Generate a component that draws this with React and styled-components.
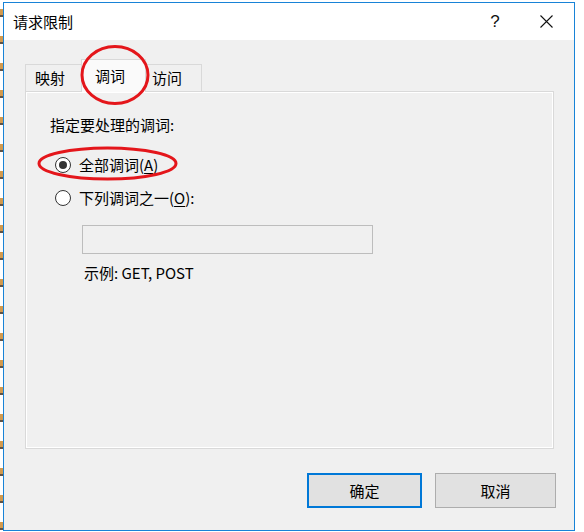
import React from 'react';
import styled, { createGlobalStyle } from 'styled-components';

const GlobalStyle = createGlobalStyle`
  html, body {
    margin: 0;
    padding: 0;
    background: #ffffff;
  }
  body {
    font-family: "Noto Sans CJK SC", "Liberation Sans", sans-serif;
    font-size: 15px;
    color: #000;
  }
`;

const Desktop = styled.div`
  position: relative;
  width: 584px;
  height: 532px;
  box-sizing: border-box;
  padding: 2px 0 0 3px;
  overflow: hidden;
  background:
    repeating-linear-gradient(
      to bottom,
      transparent 0 9px,
      #d39a4e 9px 15px,
      #5e5246 15px 17px,
      transparent 17px 27px
    ) 0 0 / 3px 100% no-repeat,
    #ffffff;
`;

const Window = styled.div`
  width: 572px;
  height: 529px;
  box-sizing: border-box;
  border: 1px solid #1883d7;
  background: #f0f0f0;
  display: flex;
  flex-direction: column;
`;

const TitleBar = styled.div`
  height: 37px;
  background: #ffffff;
  display: flex;
  align-items: center;
  padding-left: 9px;
  flex-shrink: 0;
`;

const Title = styled.div`
  flex: 1;
  font-size: 15px;
  line-height: 20px;
`;

const TitleButton = styled.div`
  width: ${p => p.$w}px;
  height: 37px;
  display: flex;
  align-items: center;
  justify-content: center;
  font-family: "Liberation Sans", sans-serif;
  font-size: 17px;
  color: #111;
`;

const Content = styled.div`
  flex: 1;
  display: flex;
  flex-direction: column;
  padding: 19px 18px 0 21px;
`;

const TabStrip = styled.div`
  display: flex;
  align-items: flex-end;
  height: 33px;
  margin-bottom: -1px;
  position: relative;
  z-index: 1;
`;

const Tab = styled.div`
  box-sizing: border-box;
  width: ${p => p.$w}px;
  height: ${p => (p.$active ? 33 : 28)}px;
  padding-left: ${p => p.$pl}px;
  margin-left: ${p => p.$ml}px;
  margin-right: ${p => (p.$active ? -2 : 0)}px;
  border: 1px solid #d9d9d9;
  border-bottom: ${p => (p.$active ? 'none' : '1px solid #d9d9d9')};
  background: ${p => (p.$active ? '#fafafa' : '#f0f0f0')};
  position: relative;
  z-index: ${p => (p.$active ? 2 : 1)};
  display: flex;
  align-items: ${p => (p.$active ? 'flex-start' : 'center')};
  padding-top: ${p => (p.$active ? 6 : 0)}px;
  line-height: 20px;
`;

const Panel = styled.div`
  box-sizing: border-box;
  width: 529px;
  height: 358px;
  border: 1px solid #d9d9d9;
  box-shadow: inset 1px 1px 0 #ffffff, inset -1px -1px 0 #ffffff;
  padding: 23px 0 0 24px;
  display: flex;
  flex-direction: column;
`;

const Label = styled.div`
  line-height: 20px;
`;

const RadioRow = styled.label`
  display: flex;
  align-items: center;
  gap: 8px;
  height: 20px;
  margin-top: ${p => p.$mt}px;
  margin-left: 5px;
  line-height: 20px;
`;

const RadioCircle = styled.span`
  box-sizing: border-box;
  width: 16px;
  height: 16px;
  border-radius: 50%;
  border: 1px solid #333333;
  background: #ffffff;
  display: flex;
  align-items: center;
  justify-content: center;
  &::after {
    content: '';
    width: 8px;
    height: 8px;
    border-radius: 50%;
    background: ${p => (p.$checked ? '#333333' : 'transparent')};
  }
`;

const Key = styled.span`
  text-decoration: underline;
  text-underline-offset: 2px;
`;

const TextBox = styled.div`
  box-sizing: border-box;
  width: 291px;
  height: 29px;
  margin: 17px 0 0 32px;
  border: 1px solid #bdbdbd;
  background: #f0f0f0;
`;

const Hint = styled.div`
  margin: 9px 0 0 34px;
  line-height: 20px;
`;

const ButtonRow = styled.div`
  display: flex;
  justify-content: flex-end;
  gap: 13px;
  margin-top: 24px;
`;

const Button = styled.div`
  box-sizing: border-box;
  width: ${p => p.$w}px;
  height: 35px;
  background: #e1e1e1;
  border: ${p => (p.$default ? '2px solid #0078d7' : '1px solid #adadad')};
  display: flex;
  align-items: center;
  justify-content: center;
  line-height: 20px;
`;

const Marks = styled.svg`
  position: absolute;
  left: 0;
  top: 0;
  width: 584px;
  height: 532px;
  pointer-events: none;
  z-index: 5;
`;

const CloseIcon = () => (
  <svg width="13" height="13" viewBox="0 0 13 13">
    <path d="M0.5 0.5 L12.5 12.5 M12.5 0.5 L0.5 12.5" stroke="#111" strokeWidth="1.1" fill="none" />
  </svg>
);

export default function App() {
  return (
    <>
      <GlobalStyle />
      <Desktop>
        <Window>
          <TitleBar>
            <Title>请求限制</Title>
            <TitleButton $w={46}>?</TitleButton>
            <TitleButton $w={56}><CloseIcon /></TitleButton>
          </TitleBar>
          <Content>
            <TabStrip>
              <Tab $w={59} $pl={9} $ml={0}>映射</Tab>
              <Tab $active $w={65} $pl={13} $ml={-3}>调词</Tab>
              <Tab $w={58} $pl={7} $ml={0}>访问</Tab>
            </TabStrip>
            <Panel>
              <Label>指定要处理的调词:</Label>
              <RadioRow $mt={20}>
                <RadioCircle $checked />
                <span>全部调词(<Key>A</Key>)</span>
              </RadioRow>
              <RadioRow $mt={13}>
                <RadioCircle />
                <span>下列调词之一(<Key>O</Key>):</span>
              </RadioRow>
              <TextBox />
              <Hint>示例: GET, POST</Hint>
            </Panel>
            <ButtonRow>
              <Button $default $w={115}>确定</Button>
              <Button $w={121}>取消</Button>
            </ButtonRow>
          </Content>
        </Window>
        <Marks viewBox="0 0 584 532">
          <ellipse cx="115" cy="75" rx="33" ry="28.5" fill="none" stroke="#e4161b" strokeWidth="3" />
          <ellipse cx="107.5" cy="163.5" rx="68.5" ry="15.5" fill="none" stroke="#e4161b" strokeWidth="3" />
        </Marks>
      </Desktop>
    </>
  );
}
